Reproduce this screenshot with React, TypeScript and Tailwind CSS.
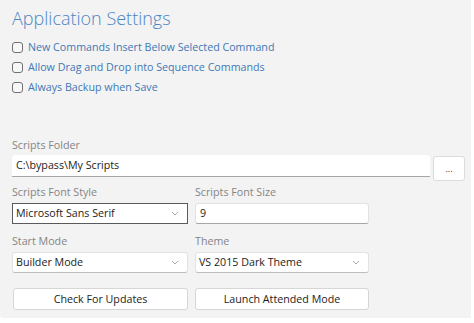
import React from 'react'

const font = { fontFamily: '"Open Sans", "Noto Sans", sans-serif' }

function Chevron() {
  return (
    <svg width="8" height="5" viewBox="0 0 8 5" className="text-gray-400">
      <path d="M1 1 L4 4 L7 1" fill="none" stroke="currentColor" strokeWidth="0.9" />
    </svg>
  )
}

function Check({ label }: { label: string }) {
  return (
    <label className="flex h-5 items-center gap-[5px]">
      <span className="h-[11px] w-[11px] rounded-[3px] border border-[#707070] bg-[#f7f7f7]" />
      <span className="text-[10.7px] text-[#3f78b5]">{label}</span>
    </label>
  )
}

function Select({ value, focused }: { value: string; focused?: boolean }) {
  return (
    <div
      className={
        focused
          ? 'flex h-[21px] items-center justify-between border border-[#5a5a5a] bg-white pr-2 pl-[3px]'
          : 'flex h-[21px] items-center justify-between rounded-[3px] border border-[#e2e2e2] border-b-[#bdbdbd] bg-white pr-2 pl-[3px]'
      }
    >
      <span className="text-[10.7px] text-[#1c1c1c]">{value}</span>
      <Chevron />
    </div>
  )
}

function Label({ children }: { children: React.ReactNode }) {
  return <div className="mb-[3px] text-[10.7px] leading-4 text-[#858585]">{children}</div>
}

export default function App() {
  return (
    <div className="h-[323px] w-[474px] bg-white" style={font}>
      <div className="h-[318px] w-[471px] rounded-bl-[3px] bg-[#f3f3f3] pt-[4px] pl-[12px] pr-[5px]">
        <h1 className="text-[18px] leading-7 font-light text-[#4b86c4]">Application Settings</h1>

        <div className="mt-[5px] flex flex-col">
          <Check label="New Commands Insert Below Selected Command" />
          <Check label="Allow Drag and Drop into Sequence Commands" />
          <Check label="Always Backup when Save" />
        </div>

        <div className="mt-[40px]">
          <Label>Scripts Folder</Label>
          <div className="flex items-start gap-[3px]">
            <div className="-mt-[1px] flex h-[22px] w-[418px] items-center rounded-t-[3px] border-b border-[#a6a6a6] bg-white pl-[4px] text-[10.7px] text-[#1c1c1c]">
              C:\bypass\My Scripts
            </div>
            <button className="flex h-[25px] w-[32px] items-center justify-center rounded-[3px] border border-[#dcdcdc] bg-white text-[9px] leading-none text-[#333]">
              ...
            </button>
          </div>
        </div>

        <div className="mt-[3px] grid w-[357px] grid-cols-[176px_174px] gap-x-[7px]">
          <div>
            <Label>Scripts Font Style</Label>
            <Select value="Microsoft Sans Serif" focused />
          </div>
          <div>
            <Label>Scripts Font Size</Label>
            <div className="flex h-[21px] items-center rounded-[3px] border border-[#e2e2e2] border-b-[#a6a6a6] bg-white pl-[4px] text-[10.7px] text-[#1c1c1c]">
              9
            </div>
          </div>

          <div className="mt-[9px]">
            <Label>Start Mode</Label>
            <Select value="Builder Mode" />
          </div>
          <div className="mt-[9px]">
            <Label>Theme</Label>
            <Select value="VS 2015 Dark Theme" />
          </div>

          <button className="mt-[15px] ml-[1px] h-[22px] rounded-[3px] border border-[#d6d6d6] bg-white text-[10.7px] text-[#1c1c1c]">
            Check For Updates
          </button>
          <button className="mt-[15px] h-[22px] rounded-[3px] border border-[#d6d6d6] bg-white text-[10.7px] text-[#1c1c1c]">
            Launch Attended Mode
          </button>
        </div>
      </div>
    </div>
  )
}
